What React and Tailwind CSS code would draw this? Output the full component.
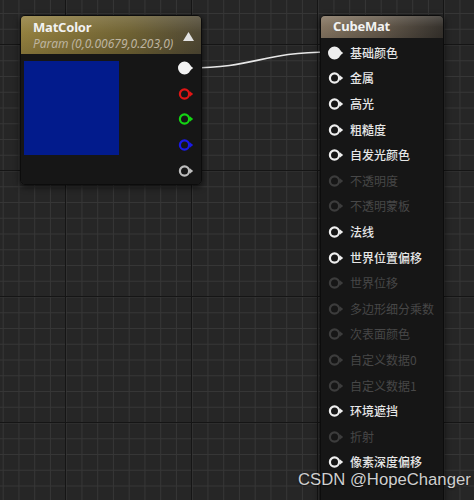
import React from "react";

const inputs = [
  { label: "基础颜色", on: true, linked: true },
  { label: "金属", on: true },
  { label: "高光", on: true },
  { label: "粗糙度", on: true },
  { label: "自发光颜色", on: true },
  { label: "不透明度", on: false },
  { label: "不透明蒙板", on: false },
  { label: "法线", on: true },
  { label: "世界位置偏移", on: true },
  { label: "世界位移", on: false },
  { label: "多边形细分乘数", on: false },
  { label: "次表面颜色", on: false },
  { label: "自定义数据0", on: false },
  { label: "自定义数据1", on: false },
  { label: "环境遮挡", on: true },
  { label: "折射", on: false },
  { label: "像素深度偏移", on: true },
];

function Pin({ color, filled }) {
  return (
    <svg width="16" height="14" viewBox="0 0 16 14" className="block">
      <circle
        cx="6.5"
        cy="7"
        r={filled ? 5.4 : 4.6}
        fill={filled ? color : "none"}
        stroke={color}
        strokeWidth="2.2"
      />
      <path d="M11.8 4.3 L15.2 7 L11.8 9.7 Z" fill={color} />
    </svg>
  );
}

export default function App() {
  return (
    <div className="relative w-[474px] h-[500px] overflow-hidden bg-[#262626] bg-[linear-gradient(to_right,#151515_1px,transparent_1px),linear-gradient(to_bottom,#151515_1px,transparent_1px),linear-gradient(to_right,#363636_1px,transparent_1px),linear-gradient(to_bottom,#363636_1px,transparent_1px)] bg-size-[126px_126px,126px_126px,15.75px_15.75px,15.75px_15.75px] bg-position-[65px_44px,65px_44px,2.7px_13px,2.7px_13px] font-['Noto_Sans','Noto_Sans_CJK_SC',sans-serif]">
      {/* wire from colour output to base colour input */}
      <svg className="absolute left-0 top-0" width="474" height="500">
        <path
          d="M190 68 C 255 68, 262 52, 330 52"
          fill="none"
          stroke="#e8e8e8"
          strokeWidth="1.6"
        />
      </svg>

      {/* parameter node */}
      <div className="absolute left-[20px] top-[15px] w-[182px] rounded-[5px] overflow-hidden shadow-[0_2px_6px_rgba(0,0,0,0.7)] border border-[#0c0c0c]">
        <div className="relative h-[38px] bg-[linear-gradient(to_right,#93803f,#6f6233_60%,#4f4834)]">
          <div className="absolute inset-0 bg-[linear-gradient(to_bottom,rgba(255,255,255,0.14),rgba(255,255,255,0)_45%,rgba(0,0,0,0.12))]" />
          <div className="relative pl-[12px] pt-[3px] leading-none">
            <div className="text-[13px] font-bold text-[#f2f2f2] tracking-[-0.2px] h-[17px] flex items-center">
              MatColor
            </div>
            <div className="text-[12px] italic text-[#bdb4a0] h-[15px] flex items-center whitespace-nowrap">
              Param (0,0.00679,0.203,0)
            </div>
          </div>
          <svg className="absolute right-[7px] top-[16px]" width="11" height="9" viewBox="0 0 11 9">
            <path d="M5.5 0 L11 9 L0 9 Z" fill="#e2e2e2" />
          </svg>
        </div>
        <div className="flex h-[130px] bg-[#161616]">
          <div className="ml-[3px] mt-[7px] w-[95px] h-[94px] bg-[#021b8c]" />
          <div className="ml-auto pr-[7px] pt-[1px] flex flex-col">
            {[
              ["#f2f2f2", true],
              ["#e01515", false],
              ["#14d414", false],
              ["#1a1ae6", false],
              ["#bdbdbd", false],
            ].map(([c, f], i) => (
              <div key={i} className="h-[26px] flex items-center">
                <Pin color={c} filled={f} />
              </div>
            ))}
          </div>
        </div>
      </div>

      {/* material node */}
      <div className="absolute left-[320px] top-[15px] w-[124px] h-[500px] rounded-t-[5px] overflow-hidden shadow-[0_2px_6px_rgba(0,0,0,0.7)] border border-[#0c0c0c]">
        <div className="relative h-[22px] bg-[linear-gradient(to_right,#857561,#64594b_50%,#35312c)]">
          <div className="absolute inset-0 bg-[linear-gradient(to_bottom,rgba(255,255,255,0.14),rgba(255,255,255,0)_50%,rgba(0,0,0,0.1))]" />
          <div className="relative pl-[12px] h-full flex items-center text-[13px] font-bold text-[#f2f2f2] tracking-[-0.2px]">
            CubeMat
          </div>
        </div>
        <div className="h-full bg-[#161616] pt-[2px] pl-[6.5px] flex flex-col">
          {inputs.map((r) => (
            <div key={r.label} className="h-[25.6px] flex items-center shrink-0">
              <Pin color={r.on ? "#eeeeee" : "#3c3c3c"} filled={r.linked} />
              <span
                className={
                  "ml-[6.5px] text-[12px] leading-none whitespace-nowrap font-['Noto_Sans_CJK_SC',sans-serif] " +
                  (r.on ? "text-[#e6e6e6] font-medium" : "text-[#474747]")
                }
              >
                {r.label}
              </span>
            </div>
          ))}
        </div>
      </div>

      <div className="absolute left-[298px] top-[471px] whitespace-nowrap text-[16.7px] leading-[17px] text-[#cfcfcf] font-['Liberation_Sans',sans-serif] [text-shadow:0_1px_2px_rgba(0,0,0,0.6)]">
        CSDN @HopeChanger
      </div>
    </div>
  );
}
